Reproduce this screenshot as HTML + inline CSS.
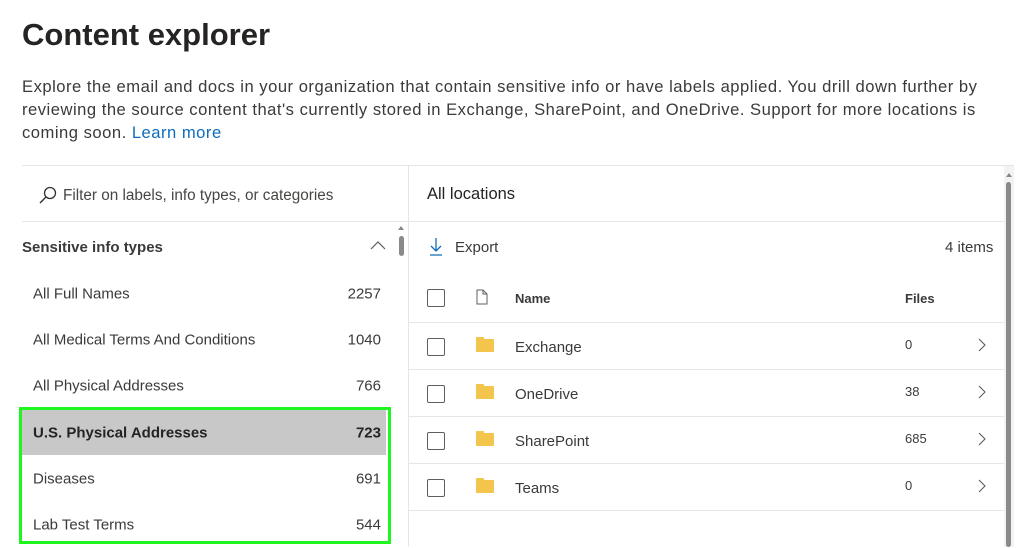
<!DOCTYPE html>
<html><head><meta charset="utf-8"><style>
*{margin:0;padding:0;box-sizing:border-box}
body{width:1024px;height:547px;overflow:hidden;background:#fff;font-family:"Liberation Sans",sans-serif;color:#323130;position:relative}
.a{position:absolute;white-space:nowrap}
h1{position:absolute;left:22px;top:17px;font-size:31px;font-weight:bold;color:#252423}
.p{left:22px;font-size:16.6px;color:#3b3a39;letter-spacing:0.5px}
.hl{position:absolute;height:1px;background:#e8e6e4}
.row{position:absolute;left:22px;width:364px;height:46px;font-size:15px;color:#3b3a39}
.row span{position:absolute;top:50%;transform:translateY(-50%)}
.row .l{left:11px}.row .r{right:5px}
.cb{position:absolute;left:427px;width:18px;height:18px;border:1px solid #605e5c;border-radius:2px}
.fold{position:absolute;left:476px;width:18px;height:13px;background:#f3c54c;border-radius:1px}
.fold:before{content:"";position:absolute;left:0;top:-2px;width:8px;height:3px;background:#f3c54c;border-radius:1px 1px 0 0}
.nm{position:absolute;left:515px;font-size:15px;color:#3b3a39}
.fl{position:absolute;left:905px;font-size:13px;color:#3b3a39}
.chev{position:absolute;left:977px}
</style></head><body>
<h1>Content explorer</h1>
<div class="a p" style="top:77px">Explore the email and docs in your organization that contain sensitive info or have labels applied. You drill down further by</div>
<div class="a p" style="top:100px">reviewing the source content that's currently stored in Exchange, SharePoint, and OneDrive. Support for more locations is</div>
<div class="a p" style="top:123px">coming soon. <span style="color:#0f6cbd">Learn more</span></div>

<div class="hl" style="left:22px;top:165px;width:992px"></div>
<div class="hl" style="left:22px;top:221px;width:386px"></div>
<div class="hl" style="left:408px;top:221px;width:596px"></div>
<div style="position:absolute;left:408px;top:166px;width:1px;height:381px;background:#e8e6e4"></div>

<svg class="a" style="left:38px;top:185px" width="20" height="20" viewBox="0 0 20 20"><circle cx="12" cy="8" r="5.5" fill="none" stroke="#323130" stroke-width="1.3"/><path d="M8 12 L2 18" stroke="#323130" stroke-width="1.4"/></svg>
<div class="a" style="left:63px;top:187px;font-size:15.3px;color:#484644">Filter on labels, info types, or categories</div>

<div class="a" style="left:22px;top:239px;font-size:15px;font-weight:bold;color:#3b3a39">Sensitive info types</div>
<svg class="a" style="left:369px;top:239px" width="18" height="12" viewBox="0 0 18 12"><path d="M2 10 L9 3 L16 10" fill="none" stroke="#605e5c" stroke-width="1.2"/></svg>
<div style="position:absolute;left:398px;top:226px;width:0;height:0;border-left:3px solid transparent;border-right:3px solid transparent;border-bottom:4px solid #888"></div>
<div style="position:absolute;left:399px;top:236px;width:5px;height:20px;background:#8a8a8a;border-radius:3px"></div>

<div class="row" style="top:271px"><span class="l">All Full Names</span><span class="r">2257</span></div>
<div class="row" style="top:317px"><span class="l">All Medical Terms And Conditions</span><span class="r">1040</span></div>
<div class="row" style="top:363px"><span class="l">All Physical Addresses</span><span class="r">766</span></div>
<div class="row" style="top:410px;background:#c8c8c8;font-weight:bold;color:#252423;height:45px"><span class="l">U.S. Physical Addresses</span><span class="r">723</span></div>
<div class="row" style="top:456px"><span class="l">Diseases</span><span class="r">691</span></div>
<div class="row" style="top:502px"><span class="l">Lab Test Terms</span><span class="r">544</span></div>
<div style="position:absolute;left:19px;top:407px;width:372px;height:137px;border:3px solid #1ff51f"></div>

<div class="a" style="left:427px;top:185px;font-size:16.5px;color:#252423">All locations</div>
<svg class="a" style="left:428px;top:237px" width="16" height="20" viewBox="0 0 16 20"><path d="M8 1 V14 M3 9 L8 14 L13 9 M2 18 H14" fill="none" stroke="#0f6cbd" stroke-width="1.3"/></svg>
<div class="a" style="left:455px;top:239px;font-size:15px;color:#3b3a39">Export</div>
<div class="a" style="left:945px;top:239px;font-size:15px;color:#3b3a39">4 items</div>

<div class="cb" style="top:289px"></div>
<svg class="a" style="left:475px;top:289px" width="14" height="16" viewBox="0 0 14 16"><path d="M2 1 H8 L12 5 V15 H2 Z M8 1 V5 H12" fill="none" stroke="#605e5c" stroke-width="1"/></svg>
<div class="a" style="left:515px;top:291px;font-size:13px;font-weight:bold;color:#3b3a39">Name</div>
<div class="a" style="left:905px;top:291px;font-size:13px;font-weight:bold;color:#3b3a39">Files</div>
<div class="hl" style="left:408px;top:322px;width:596px"></div>

<div class="cb" style="top:338px"></div><div class="fold" style="top:339px"></div><div class="a nm" style="top:339px">Exchange</div><div class="a fl" style="top:337px">0</div>
<svg class="chev" style="top:337px" width="10" height="16" viewBox="0 0 10 16"><path d="M2 2 L8 8 L2 14" fill="none" stroke="#605e5c" stroke-width="1.1"/></svg>
<div class="hl" style="left:408px;top:369px;width:596px"></div>
<div class="cb" style="top:385px"></div><div class="fold" style="top:386px"></div><div class="a nm" style="top:386px">OneDrive</div><div class="a fl" style="top:384px">38</div>
<svg class="chev" style="top:384px" width="10" height="16" viewBox="0 0 10 16"><path d="M2 2 L8 8 L2 14" fill="none" stroke="#605e5c" stroke-width="1.1"/></svg>
<div class="hl" style="left:408px;top:416px;width:596px"></div>
<div class="cb" style="top:432px"></div><div class="fold" style="top:433px"></div><div class="a nm" style="top:433px">SharePoint</div><div class="a fl" style="top:431px">685</div>
<svg class="chev" style="top:431px" width="10" height="16" viewBox="0 0 10 16"><path d="M2 2 L8 8 L2 14" fill="none" stroke="#605e5c" stroke-width="1.1"/></svg>
<div class="hl" style="left:408px;top:463px;width:596px"></div>
<div class="cb" style="top:479px"></div><div class="fold" style="top:480px"></div><div class="a nm" style="top:480px">Teams</div><div class="a fl" style="top:478px">0</div>
<svg class="chev" style="top:478px" width="10" height="16" viewBox="0 0 10 16"><path d="M2 2 L8 8 L2 14" fill="none" stroke="#605e5c" stroke-width="1.1"/></svg>
<div class="hl" style="left:408px;top:510px;width:596px"></div>

<div style="position:absolute;left:1004px;top:166px;width:10px;height:381px;background:#f3f3f3"></div>
<div style="position:absolute;left:1006px;top:173px;width:0;height:0;border-left:3px solid transparent;border-right:3px solid transparent;border-bottom:4px solid #888"></div>
<div style="position:absolute;left:1006px;top:182px;width:5px;height:365px;background:#8a8a8a;border-radius:3px"></div>
</body></html>
